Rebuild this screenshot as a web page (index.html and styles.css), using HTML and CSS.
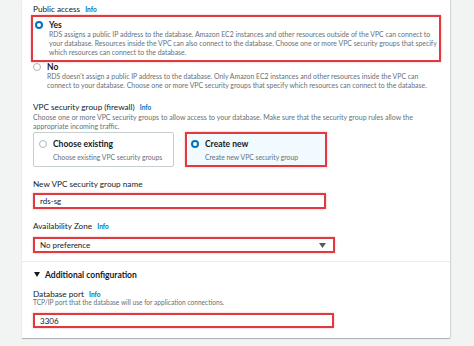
FILE: index.html
```html
<!DOCTYPE html>
<html>
<head>
<meta charset="utf-8">
<link rel="stylesheet" href="styles.css">
</head>
<body>
<div class="page">
  <div class="card">
    <div class="label">Public access <span class="info">Info</span></div>

    <div class="opt hl">
      <span class="radio on"></span>
      <div class="opt-title">Yes</div>
      <p class="desc">RDS assigns a public IP address to the database. Amazon EC2 instances and other resources outside of the VPC can connect to<br>your database. Resources inside the VPC can also connect to the database. Choose one or more VPC security groups that specify<br>which resources can connect to the database.</p>
    </div>

    <div class="opt">
      <span class="radio"></span>
      <div class="opt-title">No</div>
      <p class="desc">RDS doesn't assign a public IP address to the database. Only Amazon EC2 instances and other resources inside the VPC can<br>connect to your database. Choose one or more VPC security groups that specify which resources can connect to the database.</p>
    </div>

    <div class="label vpc">VPC security group (firewall) <span class="info">Info</span></div>
    <p class="desc sub">Choose one or more VPC security groups to allow access to your database. Make sure that the security group rules allow the<br>appropriate incoming traffic.</p>

    <div class="tiles">
      <div class="tile">
        <span class="radio"></span>
        <div class="tile-title">Choose existing</div>
        <div class="tile-sub">Choose existing VPC security groups</div>
      </div>
      <div class="tile sel">
        <span class="radio on"></span>
        <div class="tile-title">Create new</div>
        <div class="tile-sub">Create new VPC security group</div>
      </div>
    </div>

    <div class="label gap">New VPC security group name</div>
    <div class="input name">rds-sg</div>

    <div class="label gap">Availability Zone <span class="info">Info</span></div>
    <div class="input select">
      <span>No preference</span>
      <svg class="caret" width="7" height="5" viewBox="0 0 7 5"><polygon points="0,0 7,0 3.5,5" fill="#545b64"/></svg>
    </div>

    <div class="sep"></div>

    <div class="expander">
      <svg width="6" height="5" viewBox="0 0 6 5"><polygon points="0,0 6,0 3,5" fill="#16191f"/></svg>
      <span>Additional configuration</span>
    </div>

    <div class="label port">Database port <span class="info">Info</span></div>
    <div class="port-desc">TCP/IP port that the database will use for application connections.</div>
    <div class="input portin">3306</div>
  </div>
</div>
</body>
</html>
```

FILE: styles.css
```css
* { box-sizing: border-box; }
html, body { margin: 0; padding: 0; }
body {
  background: #f2f3f3;
  font-family: Lato, "Open Sans", sans-serif;
  color: #16191f;
  width: 474px;
  height: 346px;
  overflow: hidden;
}
.page {
  padding-left: 22px;
  width: 450px;
}
.card {
  background: #fff;
  width: 428px;
  height: 338px;
  padding: 4px 11px 0;
  box-shadow: 0 1px 1px rgba(0, 28, 36, 0.3), 1px 0 1px rgba(0, 28, 36, 0.12);
  border-bottom-right-radius: 1px;
}
.label {
  font-size: 8.2px;
  line-height: 11px;
  height: 11px;
  white-space: nowrap;
}
.info {
  font-size: 6.5px;
  font-weight: 700;
  color: #0073bb;
  margin-left: 3px;
}
.opt {
  display: grid;
  grid-template-columns: 14px 1fr;
  align-items: start;
}
.opt.hl {
  margin-left: -2px;
  width: 410px;
  border: 2px solid #e0393f;
  box-shadow: 0 0 2px rgba(200, 30, 30, 0.35);
  padding: 3px 0 3px 2px;
}
.radio {
  display: block;
  width: 8px;
  height: 8px;
  border-radius: 50%;
  border: 1px solid #aab7b8;
  background: #fff;
  margin-top: 1px;
  grid-row: 1;
  grid-column: 1;
}
.radio.on {
  border: 2.5px solid #0073bb;
}
.opt-title {
  grid-column: 2;
  grid-row: 1;
  font-size: 8.5px;
  line-height: 10px;
  font-weight: 700;
}
.desc {
  grid-column: 2;
  margin: 0;
  font-size: 6.9px;
  line-height: 9px;
  color: #687078;
  white-space: nowrap;
}
.vpc { margin-top: 12px; }
.desc.sub {
  font-size: 7px;
  line-height: 8.5px;
}
.tiles {
  margin-top: 2px;
  display: grid;
  grid-template-columns: 141px 142px;
  column-gap: 11px;
}
.tile {
  display: grid;
  grid-template-columns: 14px 1fr;
  height: 35px;
  border: 1px solid #c6cfd0;
  border-radius: 2px;
  padding: 6px 0 0 5px;
}
.tile.sel {
  border: 2px solid #e0393f;
  box-shadow: 0 0 2px rgba(200, 30, 30, 0.35);
  background: #f1faff;
  padding: 5px 0 0 4px;
  border-radius: 0;
}
.tile-title {
  grid-column: 2;
  grid-row: 1;
  font-size: 8.5px;
  line-height: 10px;
  font-weight: 700;
  white-space: nowrap;
}
.tile-sub {
  grid-column: 2;
  font-size: 6.8px;
  line-height: 9px;
  color: #687078;
  white-space: nowrap;
}
.gap { margin-top: 12px; }
.input {
  border: 2px solid #e0393f;
  box-shadow: 0 0 2px rgba(200, 30, 30, 0.35);
  font-size: 8px;
  height: 16px;
  line-height: 12px;
  padding-left: 5px;
  display: flex;
  align-items: center;
}
.input.name { width: 293px; margin-top: 3px; }
.input.select {
  width: 302px;
  margin-top: 5px;
  justify-content: space-between;
  padding-right: 7px;
}
.caret { display: block; }
.sep {
  margin: 8px -11px 0;
  height: 1px;
  background: #eaeded;
}
.expander {
  margin-top: 7px;
  height: 11px;
  display: flex;
  align-items: center;
  gap: 5px;
  padding-left: 1px;
  font-size: 8.5px;
  font-weight: 700;
}
.expander svg { display: block; }
.label.port {
  margin-top: 9px;
  line-height: 10px;
  height: 10px;
}
.port-desc {
  font-size: 6.6px;
  line-height: 7px;
  color: #687078;
  white-space: nowrap;
}
.input.portin {
  width: 301px;
  height: 15px;
  margin-top: 7px;
}
```
